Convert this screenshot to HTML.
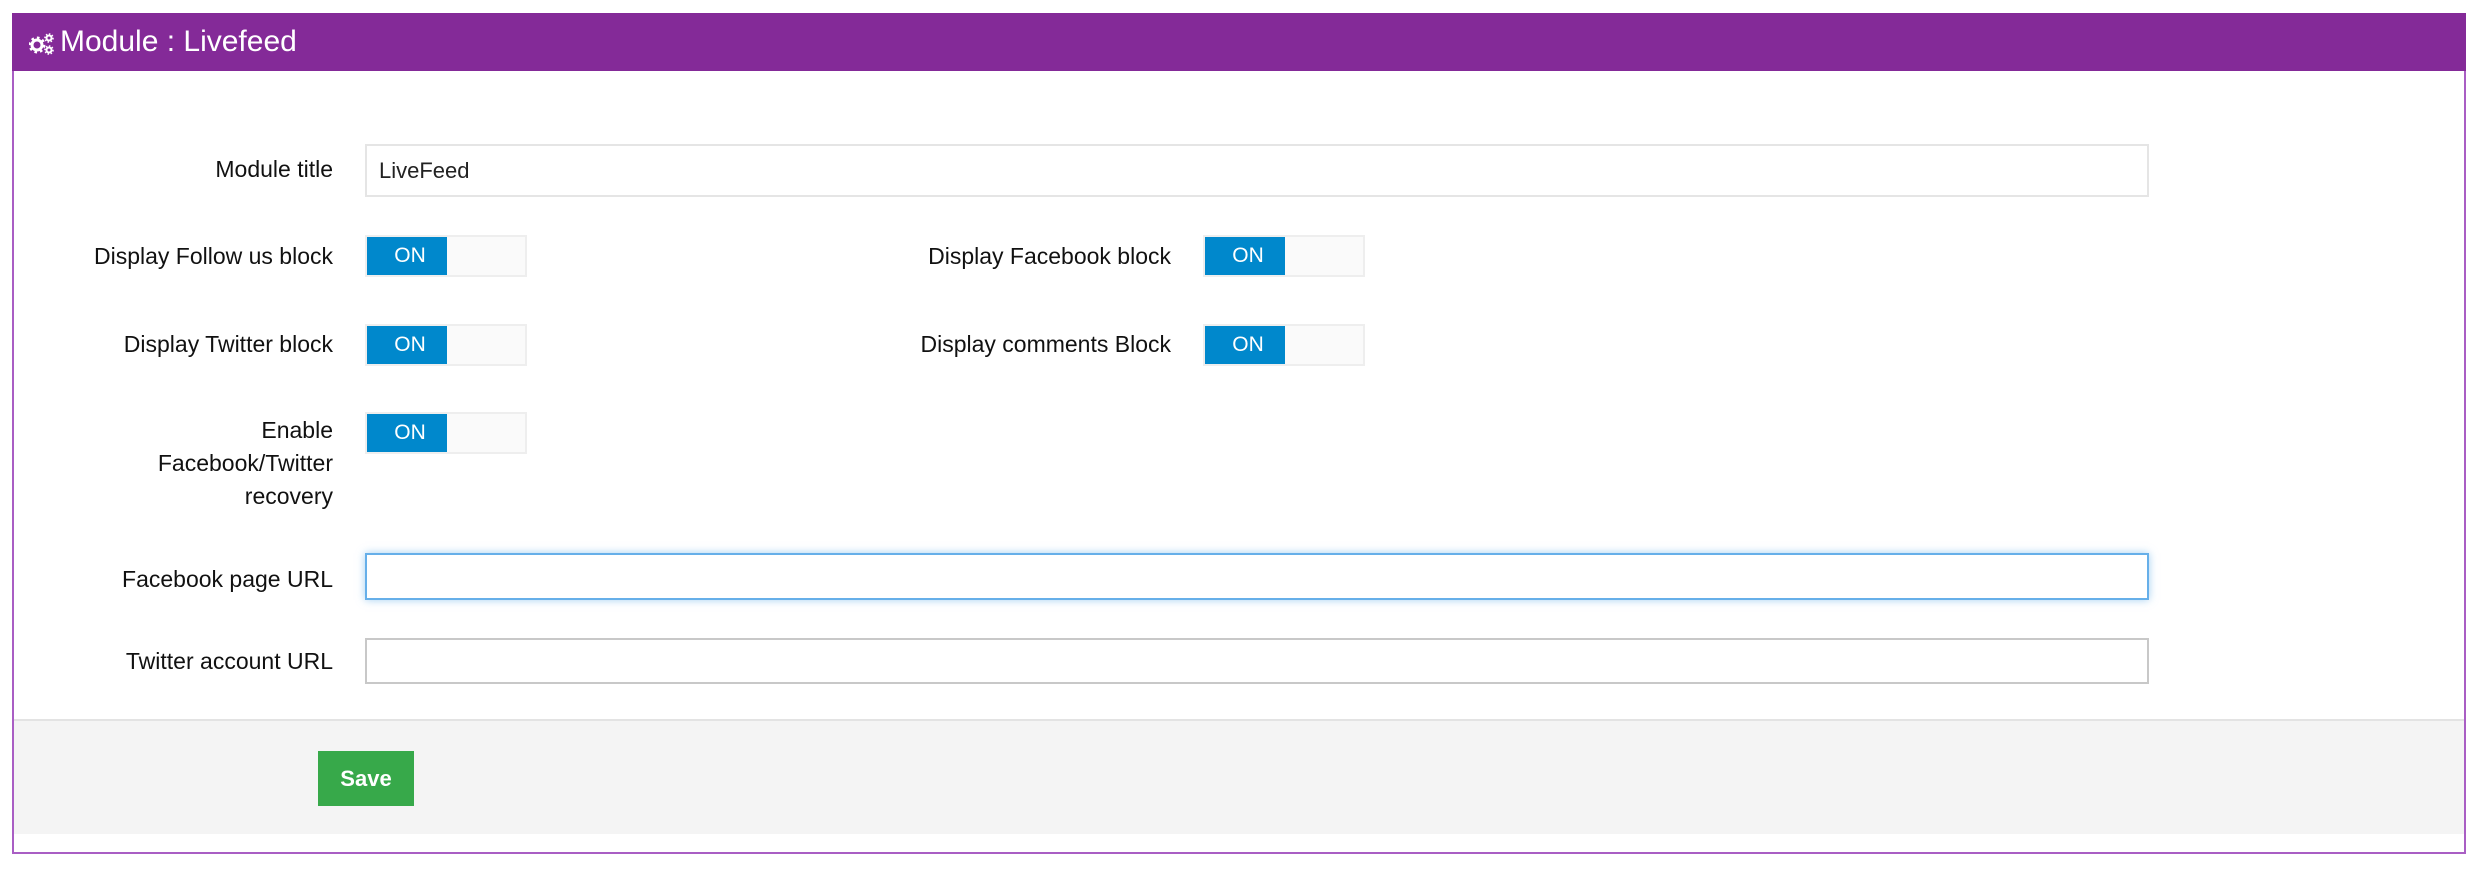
<!DOCTYPE html>
<html><head><style>
*{margin:0;padding:0;box-sizing:border-box}
body{width:2478px;height:870px;background:#fff;font-family:"Liberation Sans",sans-serif;position:relative;overflow:hidden}
.panel{position:absolute;left:12px;top:13px;width:2454px;height:841px;border:2px solid #a95ec4;border-top:none}
.hdr{position:absolute;left:12px;top:13px;width:2454px;height:58px;background:#842a98;color:#fff;font-size:30px;line-height:58px;padding-left:48px}
.lbl{position:absolute;font-size:23px;color:#111;text-align:right;line-height:33px}
.inp{position:absolute;background:#fff;border:2px solid #e5e5e5}
.tg{position:absolute;width:162px;height:42px;border:2px solid #eee;background:#fafafa}
.tg span{position:absolute;left:0;top:0;width:80px;height:38px;background:#0088cc;color:#fff;font-size:21px;text-align:center;line-height:38px;padding-left:6px}
.foot{position:absolute;left:14px;top:719px;width:2450px;height:115px;background:#f4f4f4;border-top:2px solid #e3e3e3}
.btn{position:absolute;left:318px;top:751px;width:96px;height:55px;background:#37a94a;color:#fff;font-weight:bold;font-size:22px;text-align:center;line-height:55px}
</style></head><body>
<div class="panel"></div>
<div class="hdr"><svg style="position:absolute;left:17px;top:19px" width="26" height="24" viewBox="0 0 26 24"><g fill="none" stroke="#fff"><circle cx="8" cy="13" r="5" stroke-width="3"/><circle cx="8" cy="13" r="7.2" stroke-width="2.5" stroke-dasharray="2.6 3"/><circle cx="20" cy="6" r="2.5" stroke-width="2"/><circle cx="20" cy="6" r="4" stroke-width="1.6" stroke-dasharray="1.5 1.6"/><circle cx="20" cy="18" r="2.5" stroke-width="2"/><circle cx="20" cy="18" r="4" stroke-width="1.6" stroke-dasharray="1.5 1.6"/></g></svg>Module : Livefeed</div>
<div class="lbl" style="right:2145px;top:153px">Module title</div>
<div class="inp" style="left:365px;top:144px;width:1784px;height:53px;font-size:22px;line-height:49px;padding-left:12px;color:#222">LiveFeed</div>
<div class="lbl" style="right:2145px;top:240px">Display Follow us block</div>
<div class="tg" style="left:365px;top:235px"><span>ON</span></div>
<div class="lbl" style="right:1307px;top:240px">Display Facebook block</div>
<div class="tg" style="left:1203px;top:235px"><span>ON</span></div>
<div class="lbl" style="right:2145px;top:328px">Display Twitter block</div>
<div class="tg" style="left:365px;top:324px"><span>ON</span></div>
<div class="lbl" style="right:1307px;top:328px">Display comments Block</div>
<div class="tg" style="left:1203px;top:324px"><span>ON</span></div>
<div class="lbl" style="right:2145px;top:414px">Enable<br>Facebook/Twitter<br>recovery</div>
<div class="tg" style="left:365px;top:412px"><span>ON</span></div>
<div class="lbl" style="right:2145px;top:563px">Facebook page URL</div>
<div class="inp" style="left:365px;top:553px;width:1784px;height:47px;border-color:#66afe9;box-shadow:0 0 8px rgba(102,175,233,.6)"></div>
<div class="lbl" style="right:2145px;top:645px">Twitter account URL</div>
<div class="inp" style="left:365px;top:638px;width:1784px;height:46px;border-color:#c8c8c8"></div>
<div class="foot"></div>
<div class="btn">Save</div>
</body></html>
